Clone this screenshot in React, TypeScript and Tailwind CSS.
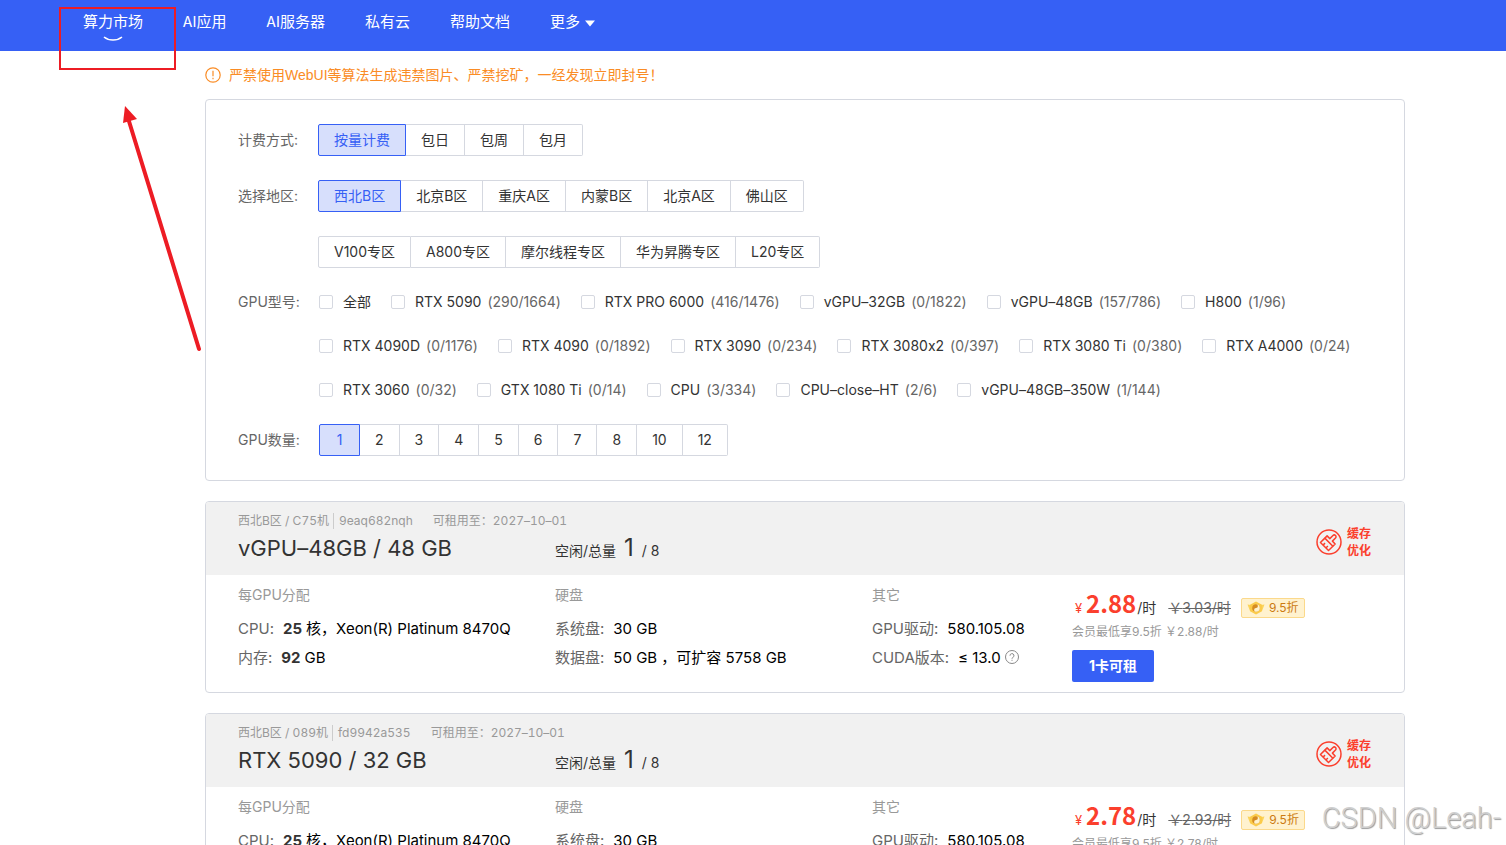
import { useState } from 'react';

const navItems = ['AI应用', 'AI服务器', '私有云', '帮助文档'];

const billing = ['按量计费', '包日', '包周', '包月'];
const regions = ['西北B区', '北京B区', '重庆A区', '内蒙B区', '北京A区', '佛山区'];
const zones = ['V100专区', 'A800专区', '摩尔线程专区', '华为昇腾专区', 'L20专区'];
const counts = ['1', '2', '3', '4', '5', '6', '7', '8', '10', '12'];

const gpuRows = [
  [
    { name: '全部', stock: '' },
    { name: 'RTX 5090', stock: '(290/1664)' },
    { name: 'RTX PRO 6000', stock: '(416/1476)' },
    { name: 'vGPU–32GB', stock: '(0/1822)' },
    { name: 'vGPU–48GB', stock: '(157/786)' },
    { name: 'H800', stock: '(1/96)' },
  ],
  [
    { name: 'RTX 4090D', stock: '(0/1176)' },
    { name: 'RTX 4090', stock: '(0/1892)' },
    { name: 'RTX 3090', stock: '(0/234)' },
    { name: 'RTX 3080x2', stock: '(0/397)' },
    { name: 'RTX 3080 Ti', stock: '(0/380)' },
    { name: 'RTX A4000', stock: '(0/24)' },
  ],
  [
    { name: 'RTX 3060', stock: '(0/32)' },
    { name: 'GTX 1080 Ti', stock: '(0/14)' },
    { name: 'CPU', stock: '(3/334)' },
    { name: 'CPU–close–HT', stock: '(2/6)' },
    { name: 'vGPU–48GB–350W', stock: '(1/144)' },
  ],
];

const machines = [
  { host: '西北B区 / C75机', id: '9eaq682nqh', title: 'vGPU–48GB / 48 GB', price: '2.88', origin: '3.03' },
  { host: '西北B区 / 089机', id: 'fd9942a535', title: 'RTX 5090 / 32 GB', price: '2.78', origin: '2.93' },
];

type RadioRowProps = {
  name: string;
  options: string[];
  value: string;
  onChange: (value: string) => void;
};

function RadioRow({ name, options, value, onChange }: RadioRowProps) {
  return (
    <div className="flex">
      {options.map((option) => (
        <label
          key={option}
          className="flex h-8 min-w-[39px] cursor-pointer items-center justify-center border-y border-r border-[#d5d8e0] px-[15px] text-[#333] first:rounded-l-xs first:border-l first:min-w-[41px] last:rounded-r-xs has-checked:border-[#3660f5] has-checked:bg-[#d7dffc] has-checked:text-[#3660f5]"
        >
          <input
            type="radio"
            name={name}
            className="sr-only"
            checked={value === option}
            onChange={() => onChange(option)}
          />
          {option}
        </label>
      ))}
    </div>
  );
}

function Header() {
  return (
    <header className="h-[51px] bg-[#3660f5] text-white">
      <nav className="flex gap-10 pt-[10px] pl-[83px] font-['Noto_Sans_CJK_SC',sans-serif] text-[15px] leading-[22px]">
        <a href="#market" className="flex flex-col items-center">
          算力市场
          <svg width="20" height="10" viewBox="0 0 20 10" fill="none">
            <path d="M1 5C6 9 14 9 19 5" stroke="#fff" strokeWidth="1.600" />
          </svg>
        </a>
        {navItems.map((item) => (
          <a key={item} href="#nav">
            {item}
          </a>
        ))}
        <a href="#more" className="flex gap-1">
          更多
          <svg width="12" height="22" viewBox="0 0 12 22">
            <path d="M1 10.500h10l-5 6z" fill="#fff" />
          </svg>
        </a>
      </nav>
    </header>
  );
}

function BrushIcon() {
  return (
    <svg width="26" height="26" viewBox="0 0 26 26" fill="none" stroke="#fb3f2d" strokeWidth="1.5">
      <circle cx="13" cy="13" r="12" />
      <g transform="rotate(45 13 13)" strokeLinejoin="round">
        <path d="M11.200 10V5.600a1.800 1.800 0 0 1 3.600 0V10h3.900v3.200H7.300V10z" />
        <path d="M7.300 13.200v6.200h11.400v-6.200M11 19.400v-2.800M15 19.400v-2.800" />
      </g>
    </svg>
  );
}

function MemberIcon() {
  return (
    <svg width="18" height="14" viewBox="0 0 18 14">
      <path d="M.5 3.500L4 4v6H3zM17.500 3.500L14 4v6h1z" fill="#fbd35a" />
      <path d="M9 .5l6 3.200v6.600l-6 3.200-6-3.200V3.700z" fill="#fbcb4a" />
      <circle cx="9" cy="7" r="3.800" fill="#d58b22" />
      <path d="M9 3.200a1.900 1.900 0 0 1 0 3.800 1.900 1.900 0 0 0 0 3.800A3.800 3.800 0 0 0 9 3.200z" fill="#fff3cf" />
    </svg>
  );
}

function Spec({ label, children }: { label: string; children: React.ReactNode }) {
  return (
    <div className="flex h-[29px] items-center gap-[9px] text-[15px] whitespace-nowrap">
      <span className="text-[#666]">{label}</span>
      <span className="flex items-center gap-1 text-black">{children}</span>
    </div>
  );
}

function MachineCard({ machine }: { machine: (typeof machines)[number] }) {
  return (
    <article className="overflow-hidden rounded-sm border border-[#d5d8e0]">
      <div className="flex h-[73px] bg-[#f1f1f1] px-8 pt-[11px]">
        <div className="w-[317px]">
          <div className="flex h-4 items-center text-xs whitespace-nowrap text-[#999] tabular-nums">
            <span>{machine.host}</span>
            <span className="ml-1 border-l border-[#ccc] pl-[5px] leading-4">{machine.id}</span>
            <span className="ml-5">可租用至：2027–10–01</span>
          </div>
          <h2 className="mt-[3px] text-[22px] leading-8 text-[#333]">{machine.title}</h2>
        </div>
        <div className="mt-[19px] flex items-baseline gap-2 leading-8 text-[#333]">
          空闲/总量 <span className="text-2xl leading-8">1</span> <span>/ 8</span>
        </div>
        <div className="mt-3 mr-px ml-auto flex h-[34px] items-center gap-[5px] text-xs leading-[17px] font-bold text-[#fb3f2d]">
          <BrushIcon />
          <span>
            缓存
            <br />
            优化
          </span>
        </div>
      </div>
      <div className="flex h-[117px] px-8 pt-[10px]">
        <div className="w-[317px]">
          <p className="mb-[9px] leading-5 text-[#999]">每GPU分配</p>
          <Spec label="CPU:">
            <b className="text-[#333]">25</b> 核，Xeon(R) Platinum 8470Q
          </Spec>
          <Spec label="内存:">
            <b className="text-[#333]">92</b> GB
          </Spec>
        </div>
        <div className="w-[317px]">
          <p className="mb-[9px] leading-5 text-[#999]">硬盘</p>
          <Spec label="系统盘:">30 GB</Spec>
          <Spec label="数据盘:">50 GB ，可扩容 5758 GB</Spec>
        </div>
        <div className="w-[200px]">
          <p className="mb-[9px] leading-5 text-[#999]">其它</p>
          <Spec label="GPU驱动:">580.105.08</Spec>
          <Spec label="CUDA版本:">
            ≤ 13.0
            <svg width="14" height="14" viewBox="0 0 14 14" fill="none" stroke="#888">
              <circle cx="7" cy="7" r="6.500" />
              <path d="M5 5.700a2 2 0 1 1 2.900 1.700c-.6.300-.9.600-.9 1.300M7 9.800v1" />
            </svg>
          </Spec>
        </div>
        <div className="whitespace-nowrap">
          <div className="flex h-9 items-center">
            <div className="flex items-baseline">
              <span className="w-[14px] pl-[3px] text-[13px] text-[#fb3f2d]">¥</span>
              <span className="font-['Noto_Sans_CJK_SC',sans-serif] text-2xl leading-8 font-bold text-[#fb3f2d]">
                {machine.price}
              </span>
              <span className="ml-px text-[#333]">/时</span>
              <s className="ml-3 text-[#666]">￥{machine.origin}/时</s>
            </div>
            <span className="mt-[10px] ml-[10px] flex h-5 items-center gap-1 rounded-xs border border-[#fbd98b] bg-[#fff2cf] px-[5px] text-xs text-[#cc7a10]">
              <MemberIcon />
              9.5折
            </span>
          </div>
          <p className="mt-[2px] text-xs leading-[18px] text-[#999]">
            会员最低享9.5折 ￥{machine.price}/时
          </p>
          <button className="mt-[9px] h-8 rounded-xs bg-[#3660f5] px-[17px] font-bold text-white">1卡可租</button>
        </div>
      </div>
    </article>
  );
}

export default function App() {
  const [bill, setBill] = useState('按量计费');
  const [area, setArea] = useState('西北B区');
  const [count, setCount] = useState('1');

  return (
    <div className="relative h-screen overflow-hidden bg-white font-['Inter','Noto_Sans_CJK_SC',sans-serif] text-sm [font-feature-settings:'calt'_0]">
      <Header />
      <main className="mr-[101px] ml-[205px]">
        <p className="flex h-12 items-center gap-2 font-['Liberation_Sans','Noto_Sans_CJK_SC',sans-serif] text-[#fa8c25]">
          <svg width="16" height="16" viewBox="0 0 16 16" fill="none" stroke="#fa8c25" strokeWidth="1.200">
            <circle cx="8" cy="8" r="7.200" />
            <path d="M8 3.800v5.400M8 10.800v1.400" />
          </svg>
          严禁使用WebUI等算法生成违禁图片、严禁挖矿，一经发现立即封号！
        </p>

        {/* Filters */}
        <section className="rounded-sm border border-[#d5d8e0] px-8 py-6 whitespace-nowrap">
          <div className="flex">
            <span className="w-20 leading-8 text-[#666]">计费方式:</span>
            <RadioRow name="billing" options={billing} value={bill} onChange={setBill} />
          </div>
          <div className="mt-6 flex">
            <span className="w-20 leading-8 text-[#666]">选择地区:</span>
            <div className="flex flex-col gap-6">
              <RadioRow name="region" options={regions} value={area} onChange={setArea} />
              <RadioRow name="region" options={zones} value={area} onChange={setArea} />
            </div>
          </div>
          <div className="my-3 flex">
            <span className="w-[81px] leading-[44px] text-[#666]">GPU型号:</span>
            <div>
              {gpuRows.map((row, i) => (
                <div key={i} className="flex h-11 items-center gap-5">
                  {row.map((gpu) => (
                    <label key={gpu.name} className="flex items-center text-[#333]">
                      <input
                        type="checkbox"
                        className="mr-[10px] size-[14px] appearance-none rounded-xs border border-[#d5d8e0] checked:bg-[#3660f5]"
                      />
                      {gpu.name}
                      {gpu.stock && <span className="ml-[6px] text-[#666]">{gpu.stock}</span>}
                    </label>
                  ))}
                </div>
              ))}
            </div>
          </div>
          <div className="flex">
            <span className="w-[81px] leading-8 text-[#666]">GPU数量:</span>
            <RadioRow name="count" options={counts} value={count} onChange={setCount} />
          </div>
        </section>

        <div className="mt-5 flex flex-col gap-5">
          {machines.map((machine) => (
            <MachineCard key={machine.id} machine={machine} />
          ))}
        </div>
      </main>

      {/* Annotations */}
      <div className="absolute top-[7px] left-[59px] h-[63px] w-[117px] border-2 border-[#ed1c24]" />
      <svg className="absolute top-[104px] left-[118px]" width="86" height="250" viewBox="0 0 86 250">
        <path d="M81 245L10 14" stroke="#ed1c24" strokeWidth="4" strokeLinecap="round" />
        <path d="M7 2l12 13-14 4z" fill="#ed1c24" />
      </svg>
      <div className="absolute right-[5px] bottom-[9px] font-['Roboto',sans-serif] text-[29px] leading-9 font-light text-[#cfcfcf] [text-shadow:1px_1px_1px_#999,-1px_-1px_0_#fff]">
        CSDN @Leah-
      </div>
    </div>
  );
}
